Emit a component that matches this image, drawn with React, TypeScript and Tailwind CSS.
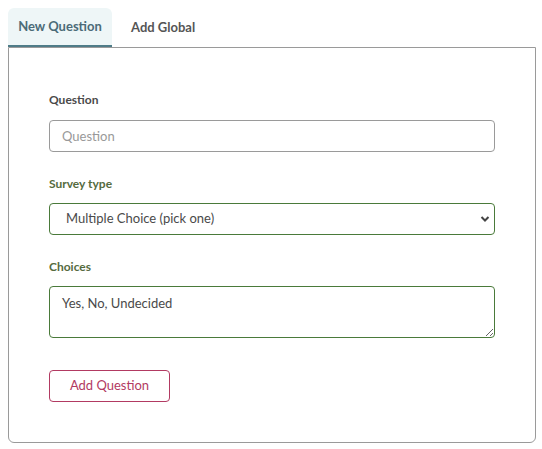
import React from "react";

export default function App() {
  const font = { fontFamily: '"Lato", "Open Sans", sans-serif' };
  return (
    <div className="p-2 bg-white" style={font}>
      <div className="flex h-[39px]">
        <div className="w-[104px] justify-center bg-[#eef6f7] rounded-t-md border-b-2 border-[#4f7c88] flex items-center text-[13px] font-bold text-[#4b6b78]">
          New Question
        </div>
        <div className="px-[19px] flex items-center text-[13px] font-bold text-[#555555]">
          Add Global
        </div>
      </div>
      <div className="w-[528px] h-[396px] border border-[#9a9a9a] rounded-b-md pl-10 pr-10 pt-[43px]">
        <label className="block text-[12px] font-bold text-[#4a4a4a] leading-[18px] mb-[11px]">Question</label>
        <input
          className="w-full h-[32px] border border-[#9a9a9a] rounded-[4px] px-[12px] text-[13px] text-[#555] placeholder:text-[#999] outline-none"
          placeholder="Question"
        />
        <label className="block text-[12px] font-bold text-[#556b3e] leading-[18px] mt-[23px] mb-[10px]">Survey type</label>
        <div className="relative">
          <select className="w-full h-[32px] border border-[#4a7a3a] rounded-[4px] pl-[16px] text-[13px] text-[#4a4a4a] appearance-none bg-white outline-none">
            <option>Multiple Choice (pick one)</option>
          </select>
          <svg className="absolute right-[5px] top-[12px] pointer-events-none" width="10" height="8" viewBox="0 0 10 8">
            <path d="M1.5 2 L5 5.5 L8.5 2" stroke="#444" strokeWidth="2" fill="none" />
          </svg>
        </div>
        <label className="block text-[12px] font-bold text-[#556b3e] leading-[18px] mt-[23px] mb-[10px]">Choices</label>
        <textarea
          className="block w-full h-[52px] border border-[#4a7a3a] rounded-[4px] px-[12px] pt-[7px] text-[13px] text-[#4a4a4a] outline-none"
          defaultValue="Yes, No, Undecided"
        />
        <button className="mt-[32px] h-[32px] w-[121px] border border-[#b23a62] rounded-[4px] text-[13px] text-[#b23a62]">
          Add Question
        </button>
      </div>
    </div>
  );
}
